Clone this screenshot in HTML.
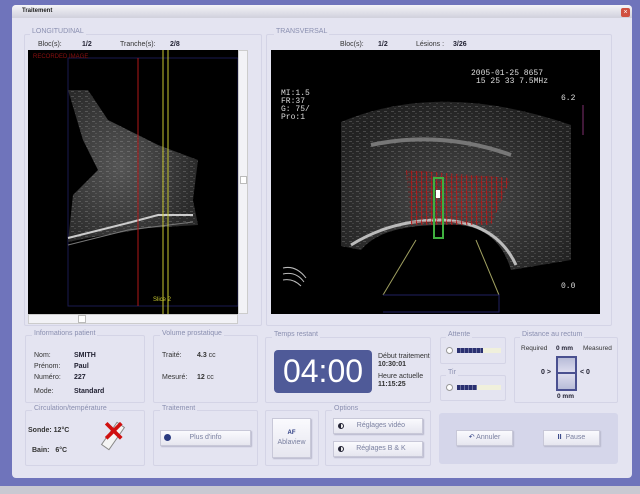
<!DOCTYPE html>
<html><head><meta charset="utf-8"><style>
*{margin:0;padding:0;box-sizing:border-box}
body{width:640px;height:494px;background:#6f74bb;font-family:"Liberation Sans",sans-serif;position:relative;overflow:hidden;font-size:7px;color:#333}
.a{position:absolute}
#win{left:12px;top:5px;width:620px;height:473px;background:#e4e4f1;border-radius:4px}
#title{left:12px;top:5px;width:620px;height:13px;background:linear-gradient(#f4f4f8,#d0d0dc);border-radius:4px 4px 0 0;font-weight:bold;font-size:6px;padding:3px 0 0 10px;color:#222}
.box{position:absolute;border:1px solid #d4d4e6;border-radius:2px}
.lg{position:absolute;font-size:7px;color:#8a8fb0;background:#e4e4f1;padding:0 2px}
.b{font-weight:bold;color:#223}
.btn{position:absolute;background:linear-gradient(#fafafe,#e6e6ef);border:1px solid #c8c8d8;box-shadow:1px 1px 1px #b8b8cc;font-size:7px;color:#7a80a0;text-align:center}
</style></head><body>
<div class="a" style="left:0;top:486px;width:640px;height:8px;background:#c9c9d2"></div>
<div id="win" class="a"></div>
<div id="title" class="a">Traitement</div>
<div class="a" style="left:621px;top:8px;width:9px;height:9px;background:#d05040;border-radius:2px;color:#fff;font-size:7px;text-align:center;line-height:9px">×</div>

<div class="box" style="left:24px;top:34px;width:238px;height:292px"></div>
<div class="lg" style="left:30px;top:28px">LONGITUDINAL</div>
<div class="a" style="left:38px;top:41px">Bloc(s):</div><div class="a b" style="left:82px;top:41px">1/2</div>
<div class="a" style="left:120px;top:41px">Tranche(s):</div><div class="a b" style="left:170px;top:41px">2/8</div>
<div class="box" style="left:266px;top:34px;width:346px;height:292px"></div>
<div class="lg" style="left:274px;top:28px">TRANSVERSAL</div>
<div class="a" style="left:340px;top:41px">Bloc(s):</div><div class="a b" style="left:378px;top:41px">1/2</div>
<div class="a" style="left:416px;top:41px">Lésions :</div><div class="a b" style="left:453px;top:41px">3/26</div>

<svg class="a" style="left:28px;top:50px" width="210" height="264">
<defs><radialGradient id="g1" cx="0.4" cy="0.5" r="0.6"><stop offset="0" stop-color="#555"/><stop offset="1" stop-color="#2a2a2a"/></radialGradient>
<pattern id="n" width="7" height="5" patternUnits="userSpaceOnUse"><rect x="1" y="1" width="3" height="1" fill="#bbb" opacity=".25"/><rect x="4" y="3" width="2" height="1" fill="#999" opacity=".2"/></pattern>
<pattern id="r" width="5" height="5" patternUnits="userSpaceOnUse"><line x1="0" y1="0" x2="1" y2="5" stroke="#c01818" stroke-width="1"/><line x1="0" y1="2" x2="5" y2="2" stroke="#901010" stroke-width=".6"/></pattern></defs>
<rect width="210" height="264" fill="#000"/>
<rect x="40" y="8" width="170" height="248" fill="none" stroke="#1a1a50"/>
<path d="M40 40 L60 40 L80 70 L130 95 L170 110 L165 150 L170 175 L120 178 L60 188 L40 192 L45 145 L70 120 L55 90 Z" fill="url(#g1)"/>
<path d="M40 40 L60 40 L80 70 L130 95 L170 110 L165 150 L170 175 L120 178 L60 188 L40 192 L45 145 L70 120 L55 90 Z" fill="url(#n)"/>
<path d="M40 188 L100 173 L130 165 L165 165" stroke="#ccc" stroke-width="2" fill="none"/>
<path d="M40 195 L100 180 L165 172" stroke="#777" stroke-width="1" fill="none"/>
<line x1="110" y1="8" x2="110" y2="256" stroke="#b01818" stroke-width="1"/>
<line x1="135" y1="0" x2="135" y2="264" stroke="#c8c830"/><line x1="140" y1="0" x2="140" y2="264" stroke="#c8c830"/>
<text x="5" y="8" fill="#8a1010" font-size="6">RECORDED IMAGE</text>
<text x="125" y="251" fill="#c8c830" font-size="6">Slice 2</text>
</svg>
<div class="a" style="left:238px;top:50px;width:10px;height:264px;background:#f2f2f6;border:1px solid #ccc"></div>
<div class="a" style="left:240px;top:176px;width:7px;height:8px;background:#fff;border:1px solid #bbb"></div>
<div class="a" style="left:28px;top:314px;width:210px;height:10px;background:#f2f2f6;border:1px solid #ccc"></div>
<div class="a" style="left:78px;top:315px;width:8px;height:8px;background:#fff;border:1px solid #bbb"></div>

<svg class="a" style="left:271px;top:50px" width="329" height="264">
<defs><radialGradient id="g2" cx="0.5" cy="0.6" r="0.6"><stop offset="0" stop-color="#4a4a4a"/><stop offset="1" stop-color="#222"/></radialGradient></defs>
<rect width="329" height="264" fill="#000"/>
<path d="M70 72 Q170 30 300 75 L300 210 L240 220 Q225 170 170 175 Q110 175 90 200 L70 196 Z" fill="url(#g2)"/>
<path d="M70 72 Q170 30 300 75 L300 210 L240 220 Q225 170 170 175 Q110 175 90 200 L70 196 Z" fill="url(#n)"/>
<path d="M80 195 Q120 170 170 170 Q225 172 245 215" stroke="#bbb" stroke-width="3" fill="none"/>
<path d="M100 95 Q170 80 240 105" stroke="#777" stroke-width="4" fill="none"/>
<path d="M135 120 L240 128 L220 175 L140 175 Z" fill="url(#r)"/>
<rect x="163" y="128" width="9" height="60" fill="none" stroke="#3fb03f" stroke-width="2"/>
<rect x="165" y="140" width="4" height="8" fill="#fff"/>
<line x1="145" y1="190" x2="112" y2="245" stroke="#a0a060"/><line x1="205" y1="190" x2="228" y2="245" stroke="#a0a060"/>
<path d="M112 245 L228 245 L228 262 L112 262" stroke="#202060" fill="none"/>
<text fill="#ddd" font-family="Liberation Mono" font-size="8"><tspan x="200" y="25">2005-01-25 8657</tspan><tspan x="205" y="33">15 25 33  7.5MHz</tspan><tspan x="10" y="45">MI:1.5</tspan><tspan x="10" y="53">FR:37</tspan><tspan x="10" y="61">G: 75/</tspan><tspan x="10" y="69">Pro:1</tspan><tspan x="290" y="50">6.2</tspan><tspan x="290" y="238">0.0</tspan></text>
<line x1="312" y1="55" x2="312" y2="85" stroke="#803070"/>
<path d="M12 218 Q25 215 35 228 M12 224 Q25 221 33 232 M12 230 Q22 228 30 236" stroke="#bbb" fill="none"/>
</svg>

<div class="box" style="left:25px;top:335px;width:120px;height:68px"></div>
<div class="lg" style="left:32px;top:330px">Informations patient</div>
<div class="a" style="left:34px;top:350px;line-height:11px">Nom:<br>Prénom:<br>Numéro:</div>
<div class="a b" style="left:74px;top:350px;line-height:11px">SMITH<br>Paul<br>227</div>
<div class="a" style="left:34px;top:388px">Mode:</div><div class="a b" style="left:74px;top:388px">Standard</div>

<div class="box" style="left:153px;top:335px;width:105px;height:68px"></div>
<div class="lg" style="left:160px;top:330px">Volume prostatique</div>
<div class="a" style="left:162px;top:352px">Traité:</div><div class="a" style="left:197px;top:352px"><b>4.3</b> cc</div>
<div class="a" style="left:162px;top:374px">Mesuré:</div><div class="a" style="left:197px;top:374px"><b>12</b> cc</div>

<div class="box" style="left:265px;top:337px;width:166px;height:66px"></div>
<div class="lg" style="left:272px;top:331px">Temps restant</div>
<div class="a" style="left:274px;top:350px;width:98px;height:43px;background:#4f5a98;border-radius:4px;color:#fff;font-size:32px;text-align:center;line-height:43px">04:00</div>
<div class="a" style="left:378px;top:353px;line-height:8px">Début traitement<br><b>10:30:01</b></div>
<div class="a" style="left:378px;top:373px;line-height:8px">Heure actuelle<br><b>11:15:25</b></div>

<div class="box" style="left:440px;top:337px;width:66px;height:27px"></div>
<div class="lg" style="left:446px;top:331px">Attente</div>
<div class="box" style="left:440px;top:375px;width:66px;height:26px"></div>
<div class="lg" style="left:446px;top:369px">Tir</div>
<div class="a" style="left:446px;top:347px;width:7px;height:7px;border:1px solid #999;border-radius:50%;background:#fff"></div>
<div class="a" style="left:457px;top:348px;width:44px;height:5px;background:#f0f0dc"><div style="width:26px;height:5px;background:repeating-linear-gradient(90deg,#2a3070 0 3px,#6a70a0 3px 4px)"></div></div>
<div class="a" style="left:446px;top:384px;width:7px;height:7px;border:1px solid #999;border-radius:50%;background:#fff"></div>
<div class="a" style="left:457px;top:385px;width:44px;height:5px;background:#f0f0dc"><div style="width:20px;height:5px;background:repeating-linear-gradient(90deg,#2a3070 0 3px,#6a70a0 3px 4px)"></div></div>

<div class="box" style="left:514px;top:337px;width:104px;height:66px"></div>
<div class="lg" style="left:520px;top:331px">Distance au rectum</div>
<div class="a" style="left:521px;top:345px;font-size:6.5px">Required</div>
<div class="a b" style="left:556px;top:345px;font-size:6.5px">0 mm</div>
<div class="a" style="left:583px;top:345px;font-size:6.5px">Measured</div>
<div class="a" style="left:556px;top:356px;width:21px;height:35px;border:2px solid #4a5090;background:linear-gradient(#b8bcd8,#dcdcee 45%,#4a5090 45%,#4a5090 52%,#dcdcee 52%,#b8bcd8)"></div>
<div class="a b" style="left:541px;top:369px">0 &gt;</div>
<div class="a b" style="left:580px;top:369px">&lt; 0</div>
<div class="a b" style="left:557px;top:393px;font-size:6.5px">0 mm</div>

<div class="box" style="left:25px;top:410px;width:120px;height:56px"></div>
<div class="lg" style="left:32px;top:405px">Circulation/température</div>
<div class="a" style="left:28px;top:427px"><b>Sonde: 12°C</b></div>
<div class="a" style="left:32px;top:447px"><b>Bain:</b> &nbsp; <b>6°C</b></div>
<div class="a" style="left:108px;top:422px;width:10px;height:28px;background:#f4f4f4;border:1px solid #888;transform:rotate(35deg)"></div>
<div class="a" style="left:102px;top:418px;color:#d01010;font-size:28px;line-height:28px;font-weight:bold">✕</div>

<div class="box" style="left:153px;top:410px;width:105px;height:56px"></div>
<div class="lg" style="left:160px;top:405px">Traitement</div>
<div class="btn" style="left:160px;top:430px;width:91px;height:16px;line-height:14px">Plus d'info</div>
<div class="a" style="left:164px;top:434px;width:7px;height:7px;border-radius:50%;background:#2a3a80"></div>

<div class="box" style="left:265px;top:410px;width:54px;height:56px"></div>
<div class="btn" style="left:272px;top:418px;width:39px;height:40px;padding-top:9px;line-height:9px"><span style="color:#2a3a80;font-weight:bold;font-size:6px">AF</span><br>Ablaview</div>

<div class="box" style="left:325px;top:410px;width:106px;height:56px"></div>
<div class="lg" style="left:332px;top:405px">Options</div>
<div class="btn" style="left:333px;top:418px;width:90px;height:16px;line-height:14px">&nbsp;&nbsp;&nbsp;Réglages vidéo</div>
<div class="btn" style="left:333px;top:441px;width:90px;height:16px;line-height:14px">&nbsp;&nbsp;&nbsp;Réglages B &amp; K</div>
<div class="a" style="left:338px;top:423px;width:6px;height:6px;border-radius:50%;background:linear-gradient(90deg,#223 50%,#eee 50%);border:1px solid #223"></div>
<div class="a" style="left:338px;top:446px;width:6px;height:6px;border-radius:50%;background:linear-gradient(90deg,#223 50%,#eee 50%);border:1px solid #223"></div>

<div class="a" style="left:439px;top:413px;width:179px;height:51px;background:#d5d6ea;border-radius:3px"></div>
<div class="btn" style="left:456px;top:430px;width:57px;height:16px;line-height:14px"><span style="color:#2a3a80">↶</span> Annuler</div>
<div class="btn" style="left:543px;top:430px;width:57px;height:16px;line-height:14px"><span style="color:#2a3a80;font-weight:bold">II</span> &nbsp;Pause</div>
</body></html>
